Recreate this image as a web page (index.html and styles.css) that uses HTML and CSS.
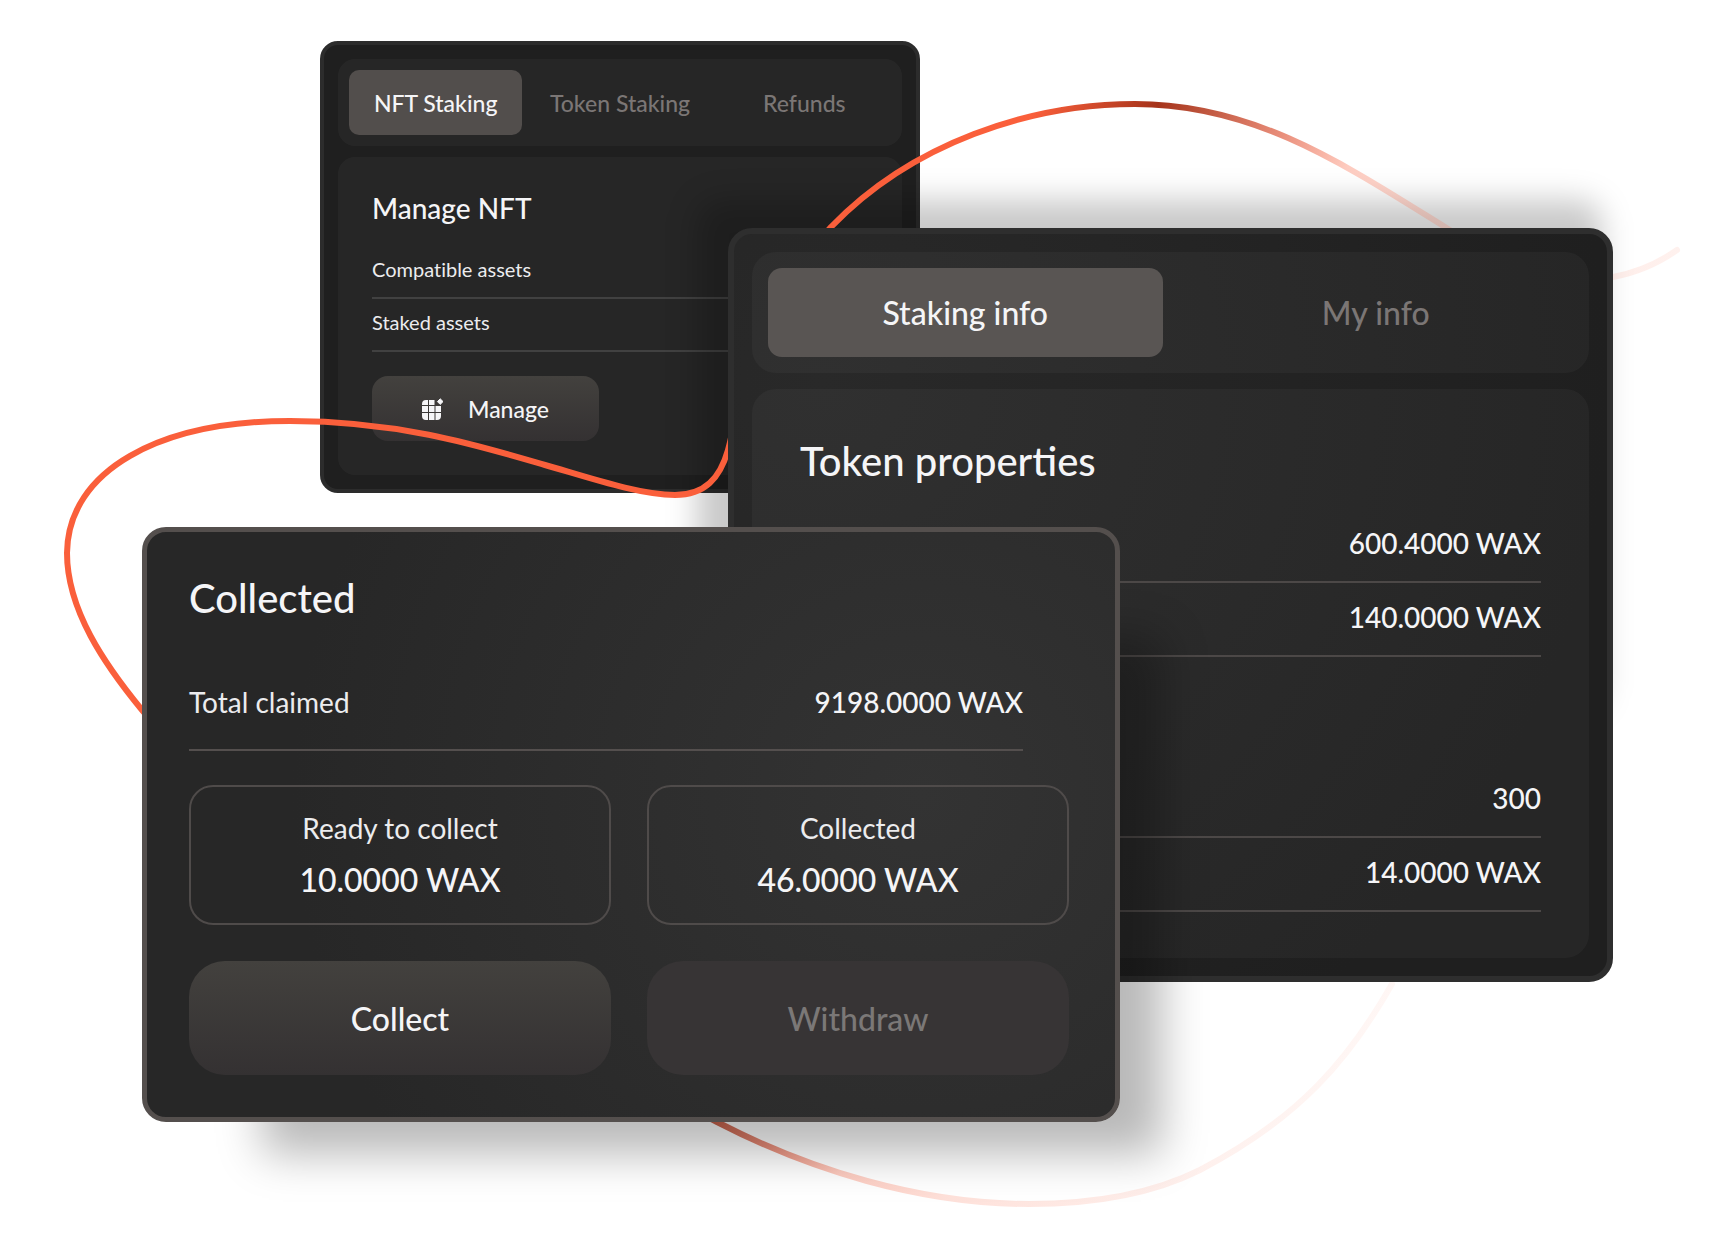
FILE: index.html
```html
<!DOCTYPE html>
<html lang="en">
<head>
    <meta charset="UTF-8">
    <meta name="viewport" content="width=device-width, initial-scale=1.0">
    <title>WAX Staking</title>
    <link rel="stylesheet" href="styles.css">
</head>
<body>
    <main class="scene">
        <section class="card card-nft">
            <nav class="panel tabs">
                <button type="button" class="tab active">NFT Staking</button>
                <button type="button" class="tab">Token Staking</button>
                <button type="button" class="tab">Refunds</button>
            </nav>
            <div class="panel content">
                <h2>Manage NFT</h2>
                <div class="row">Compatible assets</div>
                <div class="row">Staked assets</div>
                <button type="button" class="btn btn-manage">
                    <svg class="icon" viewBox="0 0 22 22" aria-hidden="true">
                        <path d="M0 7V6a4 4 0 0 1 4-4h2v5zM7 2h5.500v5H7zM0 8h6v6H0zM7 8h5.500v6H7zM13.500 8H19v6h-5.500zM0 15h6v7H4a4 4 0 0 1-4-4zM7 15h5.500v7H7zM13.500 15H19v3a4 4 0 0 1-4 4h-1.500z"/>
                        <path d="M18.200 0.800 21 3.600 18.200 6.400 15.400 3.600z" stroke="#f5f5f7" stroke-linejoin="round"/>
                    </svg>
                    Manage
                </button>
            </div>
        </section>

        <div class="glow"></div>

        <svg class="curve" viewBox="0 0 1728 1260" aria-hidden="true">
            <defs>
                <linearGradient id="fade" gradientUnits="userSpaceOnUse" x1="0" y1="0" x2="1607" y2="812">
                    <stop offset="0.54" stop-color="#fa5f3b"/>
                    <stop offset="0.6" stop-color="#a5331a"/>
                    <stop offset="0.63" stop-color="#bd4a30" stop-opacity="0.9"/>
                    <stop offset="0.67" stop-color="#de5639" stop-opacity="0.66"/>
                    <stop offset="0.71" stop-color="#fa5f3b" stop-opacity="0.32"/>
                    <stop offset="0.77" stop-color="#fa5f3b" stop-opacity="0.19"/>
                    <stop offset="0.89" stop-color="#fa5f3b" stop-opacity="0.09"/>
                    <stop offset="0.94" stop-color="#fa5f3b" stop-opacity="0.05"/>
                </linearGradient>
            </defs>
            <path d="M1677 250C1660 262 1640 272 1613 277C1550 290 1500 262 1445 227C1345 165 1255 104 1135 104C1030 104 912 143 831 227C730 340 745 390 728 450C720 478 705 495 675 495C640 495 590 478 545 465C480 446 400 421 290 421C160 421 68 470 67 553C67 610 105 665 142 710C250 840 500 1010 717 1122C810 1170 920 1204 1029 1204C1085 1204 1148 1196 1200 1170C1300 1118 1350 1058 1392 984"/>
        </svg>

        <section class="card card-token">
            <nav class="panel tabs">
                <button type="button" class="tab active">Staking info</button>
                <button type="button" class="tab">My info</button>
            </nav>
            <div class="panel content">
                <h2>Token properties</h2>
                <div class="rows">
                    <div class="row">600.4000 WAX</div>
                    <div class="row">140.0000 WAX</div>
                </div>
                <div class="rows">
                    <div class="row">300</div>
                    <div class="row">14.0000 WAX</div>
                </div>
            </div>
        </section>

        <section class="card card-collected">
            <h2>Collected</h2>
            <div class="row">
                <span class="label">Total claimed</span>
                <span>9198.0000 WAX</span>
            </div>
            <div class="grid">
                <div class="stat">
                    <span class="label">Ready to collect</span>
                    <span class="value">10.0000 WAX</span>
                </div>
                <div class="stat">
                    <span class="label">Collected</span>
                    <span class="value">46.0000 WAX</span>
                </div>
                <button type="button" class="btn">Collect</button>
                <button type="button" class="btn" disabled>Withdraw</button>
            </div>
        </section>
    </main>
</body>
</html>
```
FILE: styles.css
```css
* {
    box-sizing: border-box;
}
body {
    margin: 0;
    background-color: #fff;
    color: #f5f5f7;
    font-family: Lato, sans-serif;
    font-weight: 500;
}
h2 {
    margin: 0;
    font-size: 40px;
    line-height: 48px;
    font-weight: 500;
}
button {
    border: none;
    padding: 0;
    color: inherit;
    font: inherit;
    cursor: pointer;
}
.scene {
    position: relative;
    min-height: 1260px;
}

/* Cards overlap freely on the scene */
.card {
    position: absolute;
    display: flex;
    flex-direction: column;
}
.panel {
    background-color: rgba(255, 255, 255, 0.035);
    border-radius: 24px;
}
.tabs {
    display: flex;
    gap: 16px;
    padding: 16px;
}
.tab {
    flex: 1;
    height: 89px;
    border-radius: 14px;
    background: none;
    color: #7b7675;
    font-size: 32px;
}
.tab.active {
    background-color: #595553;
    color: #f5f5f7;
}
.row {
    display: flex;
    justify-content: space-between;
    border-bottom: 2px solid #4c4847;
    font-size: 28px;
    line-height: 34px;
}
.label {
    color: #ececee;
    font-weight: 400;
}
.btn {
    height: 114px;
    border-radius: 36px;
    background: linear-gradient(#43413e, #343132);
    font-size: 32px;
}
.btn:disabled {
    background: #373435;
    color: #7b7877;
    cursor: default;
}

/* NFT staking */
.card-nft {
    left: 320px;
    top: 41px;
    width: 600px;
    gap: 11px;
    padding: 14px;
    border: 4px solid #2c2c2c;
    border-radius: 18px;
    background-color: #1f1f1f;
}
.card-nft .panel {
    border-radius: 17px;
}
.card-nft .tabs {
    gap: 11px;
    padding: 11px;
}
.card-nft .tab {
    height: 65px;
    border-radius: 10px;
    font-size: 23px;
}
.card-nft .active {
    background-color: #524e4c;
}
.card-nft .content {
    padding: 34px;
}
.card-nft h2 {
    margin-bottom: 21px;
    font-size: 28px;
    line-height: 34px;
}
.card-nft .row {
    padding: 11px 0 16px;
    border-color: #414141;
    color: #ececee;
    font-size: 20px;
    font-weight: 400;
    font-variant-ligatures: none;
    line-height: 24px;
}
.btn-manage {
    display: flex;
    align-items: center;
    justify-content: center;
    gap: 24px;
    width: 227px;
    height: 65px;
    margin-top: 24px;
    border-radius: 16px;
    font-size: 23px;
}
.icon {
    width: 22px;
    height: 22px;
    fill: #f5f5f7;
}

/* Soft shadow behind the token card */
.glow {
    position: absolute;
    left: 697px;
    top: 200px;
    width: 905px;
    height: 510px;
    border-radius: 24px;
    background-color: rgba(0, 0, 0, 0.21);
    filter: blur(15px);
}
.curve {
    position: absolute;
    left: 0;
    top: 0;
    width: 1728px;
    height: 1260px;
    fill: none;
    stroke: url(#fade);
    stroke-width: 6px;
    stroke-linecap: round;
}

/* Token properties */
.card-token {
    left: 728px;
    top: 228px;
    width: 885px;
    gap: 16px;
    padding: 18px;
    border: 6px solid #2e2e2e;
    border-radius: 24px;
    background: radial-gradient(circle at 10% 20%, #292929, #1f1f1f 80%);
}
.card-token .content {
    padding: 48px 48px 46px;
}
.card-token .rows {
    margin-top: 24px;
}
.card-token .rows + .rows {
    margin-top: 107px;
}
.card-token .row {
    justify-content: flex-end;
    padding: 17px 0 21px;
}

/* Collected */
.card-collected {
    left: 142px;
    top: 527px;
    width: 978px;
    padding: 42px;
    border: 5px solid #544f4d;
    border-radius: 24px;
    background: radial-gradient(circle at 80% 45%, #333333, #272727 75%);
    box-shadow: 81px 71px 42px -39px rgba(0, 0, 0, 0.28);
}
.card-collected .row {
    width: 834px;
    padding: 63px 0 30px;
    border-color: #544f4e;
}
.grid {
    display: grid;
    grid-template-columns: 1fr 1fr;
    gap: 36px;
    margin: 34px 4px 0 0;
}
.stat {
    display: flex;
    flex-direction: column;
    align-items: center;
    gap: 16px;
    padding: 24px;
    border: 2px solid #4f4b4a;
    border-radius: 24px;
    font-size: 28px;
    line-height: 34px;
}
.value {
    font-size: 32px;
    line-height: 38px;
}
```
